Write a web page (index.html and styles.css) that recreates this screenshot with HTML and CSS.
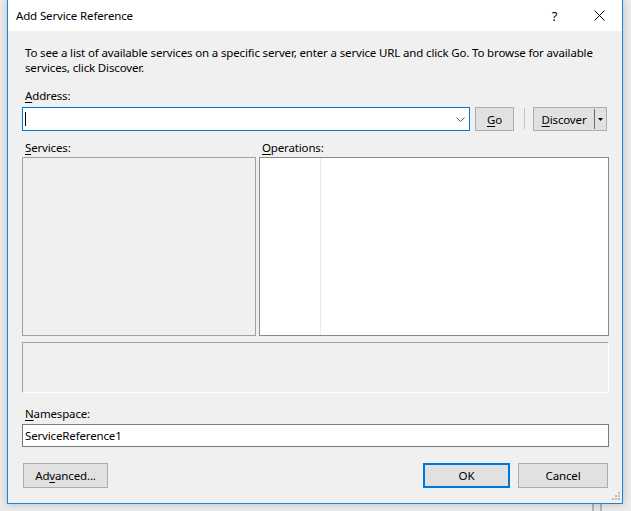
FILE: index.html
```html
<!DOCTYPE html>
<html>
<head>
<meta charset="utf-8">
<title>Add Service Reference</title>
<link rel="stylesheet" href="styles.css">
</head>
<body>
<div class="window">
  <div class="titlebar">
    <span class="title">Add Service Reference</span>
    <span class="tb-btn help">?</span>
    <span class="tb-btn close">
      <svg width="11" height="11" viewBox="0 0 11 11"><path d="M0.5 0.5 L10.5 10.5 M10.5 0.5 L0.5 10.5" stroke="#000" stroke-width="1" fill="none"/></svg>
    </span>
  </div>
  <div class="content">
    <p class="desc">To see a list of available services on a specific server, enter a service URL and click Go. To browse for available<br>services, click Discover.</p>
    <div class="label lbl-address"><u>A</u>ddress:</div>
    <div class="address-row">
      <div class="combo">
        <span class="cursor"></span>
        <svg class="chevron" width="9" height="5" viewBox="0 0 9 5"><path d="M0.5 0.5 L4.5 4.5 L8.5 0.5" stroke="#606060" stroke-width="1" fill="none"/></svg>
      </div>
      <button class="btn go"><u>G</u>o</button>
      <span class="sep"></span>
      <div class="btn discover">
        <span class="discover-main"><u>D</u>iscover</span>
        <span class="split-line"></span>
        <span class="discover-arrow"><svg width="5" height="3" viewBox="0 0 5 3"><path d="M0 0 H5 L2.5 3 Z" fill="#000"/></svg></span>
      </div>
    </div>
    <div class="lists">
      <div class="label"><u>S</u>ervices:</div>
      <div class="label"><u>O</u>perations:</div>
      <div class="listbox services-box"></div>
      <div class="listbox ops-box"><div class="ops-col"></div></div>
    </div>
    <div class="status"></div>
    <div class="label lbl-ns"><u>N</u>amespace:</div>
    <div class="ns-input">ServiceReference1</div>
    <div class="buttons">
      <button class="btn advanced">Ad<u>v</u>anced...</button>
      <button class="btn ok">OK</button>
      <button class="btn cancel">Cancel</button>
    </div>
  </div>
  <svg class="grip" width="9" height="9" viewBox="0 0 9 9">
    <rect x="6" y="0" width="2" height="2" fill="#bcbcbc"/>
    <rect x="3" y="3" width="2" height="2" fill="#bcbcbc"/>
    <rect x="6" y="3" width="2" height="2" fill="#bcbcbc"/>
    <rect x="0" y="6" width="2" height="2" fill="#bcbcbc"/>
    <rect x="3" y="6" width="2" height="2" fill="#bcbcbc"/>
    <rect x="6" y="6" width="2" height="2" fill="#bcbcbc"/>
  </svg>
</div>
<div class="behind"></div>
</body>
</html>
```
FILE: styles.css
```css
* { box-sizing: border-box; }
html, body { margin: 0; padding: 0; }
body {
  width: 631px;
  height: 511px;
  overflow: hidden;
  background: #ebebeb;
  font-family: "Segoe UI", "Noto Sans", sans-serif;
  font-size: 11.5px;
  letter-spacing: -0.15px;
  color: #000;
  position: relative;
}
u { text-decoration-thickness: 1px; text-underline-offset: 2px; }
.window {
  position: relative;
  z-index: 1;
  margin-left: 7px;
  width: 616px;
  height: 504px;
  border: 1px solid #1883d7;
  border-top: none;
  background: #f0f0f0;
  box-shadow: 0 0 8px rgba(0, 0, 0, 0.2);
  display: flex;
  flex-direction: column;
}
.titlebar {
  flex: none;
  height: 31px;
  background: #fff;
  display: flex;
  align-items: center;
}
.title { flex: 1; padding-left: 8px; line-height: 15px; }
.tb-btn {
  width: 45px;
  height: 31px;
  display: flex;
  align-items: center;
  justify-content: center;
}
.help { font-size: 13px; }
.content {
  flex: 1;
  padding: 14px 13px 0 14px;
  display: flex;
  flex-direction: column;
}
.desc { margin: 0; padding-left: 3px; line-height: 15px; white-space: nowrap; }
.label { padding-left: 3px; line-height: 15px; height: 15px; white-space: nowrap; }
.lbl-address { margin-top: 13px; }
.address-row { margin-top: 4px; height: 24px; display: flex; }
.combo {
  width: 448px;
  border: 1px solid #0078d7;
  background: #fff;
  display: flex;
  align-items: center;
}
.cursor { margin-left: 2px; width: 1px; height: 14px; background: #000; }
.chevron { margin-left: auto; margin-right: 4px; }
.btn {
  font: inherit;
  letter-spacing: inherit;
  color: #000;
  background: #e1e1e1;
  border: 1px solid #adadad;
  padding: 0;
  display: flex;
  align-items: center;
  justify-content: center;
}
.go { width: 39px; margin-left: 5px; }
.sep { width: 1px; margin: 1px 0 2px 10px; background: #c4c4c4; }
.discover { width: 74px; margin-left: 8px; justify-content: flex-start; }
.discover-main { width: 60px; text-align: center; }
.split-line { width: 1px; align-self: stretch; margin: 1px 0 1px; background: #6a6a6a; }
.discover-arrow { flex: 1; display: flex; align-items: center; justify-content: center; }
.lists {
  margin-top: 9px;
  display: grid;
  grid-template-columns: 234px 350px;
  grid-template-rows: 15px 179px;
  column-gap: 3px;
  row-gap: 2px;
}
.listbox { border: 1px solid #a0a0a0; }
.services-box { background: #f0f0f0; }
.ops-box { background: #fff; border-color: #8a8a8a; }
.ops-col { margin-left: 60px; height: 100%; border-left: 1px solid #e2ecf8; }
.status {
  margin-top: 6px;
  height: 51px;
  border: 1px solid;
  border-color: #a0a0a0 #fff #fff #a0a0a0;
}
.lbl-ns { margin-top: 13px; }
.ns-input {
  margin-top: 3px;
  height: 23px;
  border: 1px solid #7a7a7a;
  background: #fff;
  padding-left: 2px;
  line-height: 21px;
}
.buttons { margin-top: 16px; height: 25px; display: flex; }
.advanced { width: 85px; margin-left: 1px; }
.ok { width: 87px; margin-left: auto; border: 2px solid #0078d7; }
.cancel { width: 90px; margin-left: 8px; margin-right: 1px; }
.grip { position: absolute; right: 1px; bottom: 2px; }
.behind {
  position: absolute;
  left: 592px;
  top: 504px;
  width: 10px;
  height: 7px;
  border-left: 2px solid #b4b4b4;
  border-right: 2px solid #b4b4b4;
  background: #e4e4e4;
}
```
